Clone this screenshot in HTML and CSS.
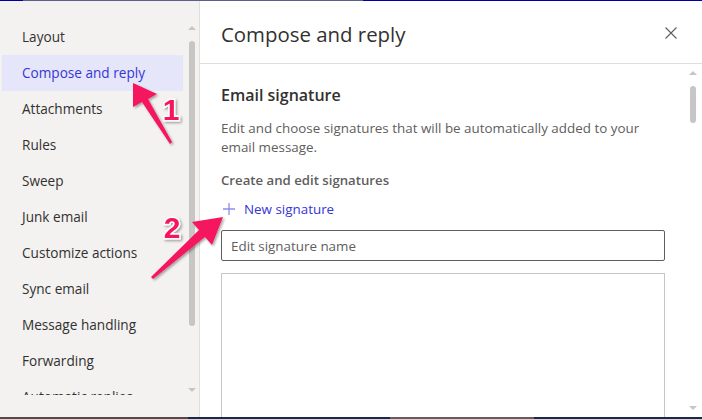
FILE: index.html
```html
<!DOCTYPE html>
<html lang="en">
<head>
    <meta charset="UTF-8">
    <meta name="viewport" content="width=device-width, initial-scale=1.0">
    <title>Settings - Compose and reply</title>
    <link rel="stylesheet" href="styles.css">
</head>
<body>
    <div class="top-edge"></div>
    <div class="app">
        <nav class="sidebar">
            <ul class="nav-list">
                <li class="nav-item">Layout</li>
                <li class="nav-item active">Compose and reply</li>
                <li class="nav-item">Attachments</li>
                <li class="nav-item">Rules</li>
                <li class="nav-item">Sweep</li>
                <li class="nav-item">Junk email</li>
                <li class="nav-item">Customize actions</li>
                <li class="nav-item">Sync email</li>
                <li class="nav-item">Message handling</li>
                <li class="nav-item">Forwarding</li>
                <li class="nav-item">Automatic replies</li>
            </ul>
            <div class="scrollbar nav-scroll">
                <span class="arrow-up"></span>
                <span class="thumb"></span>
                <span class="spacer"></span>
                <span class="arrow-down"></span>
            </div>
        </nav>

        <main class="panel">
            <header class="panel-header">
                <h1>Compose and reply</h1>
                <button class="close-btn" aria-label="Close">
                    <svg width="12" height="12" viewBox="0 0 12 12">
                        <path d="M0.5 0.5 L11.5 11.5 M11.5 0.5 L0.5 11.5" stroke="#605e5c" stroke-width="1.1" fill="none"/>
                    </svg>
                </button>
            </header>

            <div class="panel-body">
                <section class="content">
                    <h2>Email signature</h2>
                    <p class="desc">Edit and choose signatures that will be automatically added to your email message.</p>
                    <p class="sub-title">Create and edit signatures</p>
                    <div class="new-link">
                        <svg width="12" height="12" viewBox="0 0 12 12">
                            <path d="M6 0 V12 M0 6 H12" stroke="#8c8cf0" stroke-width="1.3" fill="none"/>
                        </svg>
                        <span>New signature</span>
                    </div>
                    <input class="sig-name" type="text" placeholder="Edit signature name">
                    <div class="editor"></div>
                </section>
                <div class="scrollbar body-scroll">
                    <span class="arrow-up"></span>
                    <span class="thumb"></span>
                    <span class="spacer"></span>
                    <span class="arrow-down"></span>
                </div>
            </div>
        </main>
    </div>
    <div class="bottom-edge"></div>

    <svg class="marks" width="702" height="419" viewBox="0 0 702 419">
        <defs>
            <filter id="shade" x="-30%" y="-30%" width="160%" height="160%">
                <feDropShadow dx="1.5" dy="1.5" stdDeviation="1" flood-color="#000" flood-opacity="0.35"/>
            </filter>
        </defs>
        <g fill="#f5175f" filter="url(#shade)">
            <polygon points="133,83 157,94 148,99 172,142 170,144 142,102 133,107"/>
            <polygon points="223,217 212,245 205,237 153,279 151,277 199,230 192,222"/>
        </g>
        <g class="mark-num" filter="url(#shade)">
            <text x="171" y="120">1</text>
            <text x="172" y="238">2</text>
        </g>
    </svg>
</body>
</html>
```

FILE: styles.css
```css
body {
    margin: 0;
    width: 702px;
    height: 419px;
    overflow: hidden;
    font-family: 'Segoe UI', 'Open Sans', sans-serif;
    color: #323130;
    background-color: #fff;
    position: relative;
}

.top-edge {
    height: 1px;
    background: linear-gradient(to right, #0000a0 0, #0000a0 23px, #5c6089 23px, #5c6089 363px, #0000a5 363px);
}

.bottom-edge {
    height: 2px;
    background: linear-gradient(to right, #4d4d4d 0, #4d4d4d 188px, #0c2f4f 188px, #0c2f4f 390px, #5f5f5f 390px, #5f5f5f 534px, #0c2f4f 534px);
}

.app {
    display: flex;
    height: 416px;
}

/* left navigation */
.sidebar {
    width: 200px;
    flex-shrink: 0;
    background-color: #f3f2f1;
    border-right: 1px solid #e1dfdd;
    display: flex;
    padding-left: 2px;
    box-sizing: border-box;
}

.nav-list {
    list-style: none;
    margin: 18px 0 0 0;
    padding: 0;
    width: 181px;
    height: 376px;
    overflow: hidden;
}

.nav-item {
    height: 36px;
    line-height: 36px;
    padding-left: 20px;
    font-size: 13.6px;
    color: #323130;
    white-space: nowrap;
}

.nav-item.active {
    background-color: #e6e6fa;
    color: #3535d8;
}

/* fake scrollbars */
.scrollbar {
    width: 10px;
    display: flex;
    flex-direction: column;
    align-items: center;
}

.nav-scroll {
    margin-left: 4px;
    padding-top: 25px;
    height: 366px;
}

.arrow-up,
.arrow-down {
    width: 0;
    height: 0;
    border-left: 4px solid transparent;
    border-right: 4px solid transparent;
}

.arrow-up {
    border-bottom: 4px solid #c8c6c4;
}

.arrow-down {
    border-top: 4px solid #c8c6c4;
}

.thumb {
    width: 6px;
    background-color: #c8c6c4;
    border-radius: 3px;
}

.spacer {
    flex: 1;
}

.nav-scroll .thumb {
    margin-top: 11px;
    height: 285px;
}

/* right panel */
.panel {
    flex: 1;
    display: flex;
    flex-direction: column;
    min-width: 0;
}

.panel-header {
    border-bottom: 1px solid #e1dfdd;
    display: flex;
    align-items: center;
    justify-content: space-between;
    padding: 3px 25px 0 21px;
    height: 59px;
}

.panel-header h1 {
    margin: 0;
    font-size: 20.4px;
    font-weight: 400;
    color: #323130;
}

.close-btn {
    border: none;
    background: none;
    padding: 0;
    width: 12px;
    height: 12px;
    display: flex;
    margin-top: -2px;
}

.panel-body {
    flex: 1;
    display: flex;
    overflow: hidden;
}

.content {
    flex: 1;
    padding-left: 21px;
    padding-right: 23px;
    overflow: hidden;
}

.content h2 {
    margin: 19px 0 0 0;
    font-size: 16px;
    font-weight: 600;
    line-height: 24px;
    color: #323130;
}

.desc {
    margin: 12px 0 0 0;
    font-size: 13.4px;
    line-height: 19px;
    color: #605e5c;
}

.sub-title {
    margin: 13px 0 0 0;
    font-size: 13.2px;
    font-weight: 600;
    line-height: 20px;
    color: #605e5c;
}

.new-link {
    margin-top: 9px;
    display: flex;
    align-items: center;
    gap: 9px;
    padding-left: 2px;
    height: 20px;
    font-size: 13.4px;
    color: #3535d8;
}

.sig-name {
    display: block;
    margin-top: 11px;
    width: 100%;
    height: 31px;
    box-sizing: border-box;
    border: 1px solid #605e5c;
    border-radius: 2px;
    padding: 0 9px;
    font-family: inherit;
    font-size: 13.4px;
    color: #323130;
}

.sig-name::placeholder {
    color: #605e5c;
}

.editor {
    margin-top: 12px;
    height: 200px;
    border: 1px solid #c8c6c4;
}

.body-scroll {
    margin-right: 4px;
    padding-top: 7px;
    padding-bottom: 7px;
}

.body-scroll .thumb {
    margin-top: 11px;
    height: 37px;
}

/* annotation overlay */
.marks {
    position: absolute;
    left: 0;
    top: 0;
    pointer-events: none;
}

.mark-num text {
    font-family: 'Liberation Sans', sans-serif;
    font-weight: 700;
    font-size: 30px;
    text-anchor: middle;
    fill: #f5175f;
    stroke: #fff;
    stroke-width: 3px;
    paint-order: stroke;
}
```
